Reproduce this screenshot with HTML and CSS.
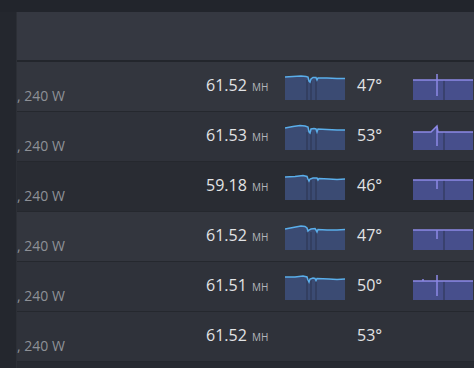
FILE: index.html
```html
<!DOCTYPE html>
<html lang="en">
<head>
  <meta charset="UTF-8">
  <meta name="viewport" content="width=device-width, initial-scale=1.0">
  <title>Rigs</title>
  <link rel="stylesheet" href="styles.css">
</head>
<body>
  <div class="page">
    <div class="topbar"></div>
    <div class="content">
      <div class="sidebar"></div>
      <div class="panel">
        <div class="panel-head"></div>

        <div class="row">
          <div class="name">, 240 W</div>
          <div class="rate">61.52 <span class="unit">MH</span></div>
          <svg class="chart" viewBox="0 0 60 26" preserveAspectRatio="none">
            <path class="fill-blue" d="M0 3 L8 2.5 L16 2 L21 2.5 L23 3 L24 7 L25 8 L26 5 L28 3.5 L31 3.5 L32 6 L33 4 L42 4 L52 4.5 L60 4.5 L60 26 L0 26 Z"/>
            <path class="grid" d="M22 6 V26 M26 6 V26 M31 6 V26"/>
            <path class="line-blue" d="M0 3 L8 2.5 L16 2 L21 2.5 L23 3 L24 7 L25 8 L26 5 L28 3.5 L31 3.5 L32 6 L33 4 L42 4 L52 4.5 L60 4.5"/>
          </svg>
          <div class="temp">47°</div>
          <svg class="chart" viewBox="0 0 60 26" preserveAspectRatio="none">
            <path class="fill-violet" d="M0 6 H60 V26 H0 Z"/>
            <path class="grid" d="M31 6 V26"/>
            <path class="line-violet" d="M0 6 H60 M24 0 V22"/>
          </svg>
        </div>

        <div class="row dim">
          <div class="name">, 240 W</div>
          <div class="rate">61.53 <span class="unit">MH</span></div>
          <svg class="chart" viewBox="0 0 60 26" preserveAspectRatio="none">
            <path class="fill-blue" d="M0 4 L8 2.5 L15 1.5 L20 2 L23 3 L24 8 L25 9 L26 5 L29 4.5 L31 5 L32 8 L33 5 L42 5.5 L52 6 L60 6 L60 26 L0 26 Z"/>
            <path class="grid" d="M22 8 V26 M26 8 V26 M31 8 V26"/>
            <path class="line-blue" d="M0 4 L8 2.5 L15 1.5 L20 2 L23 3 L24 8 L25 9 L26 5 L29 4.5 L31 5 L32 8 L33 5 L42 5.5 L52 6 L60 6"/>
          </svg>
          <div class="temp">53°</div>
          <svg class="chart" viewBox="0 0 60 26" preserveAspectRatio="none">
            <path class="fill-violet" d="M0 8 L18 8 L21 5 L24 2 L25 8 H60 V26 H0 Z"/>
            <path class="grid" d="M31 8 V26"/>
            <path class="line-violet" d="M0 8 L18 8 L21 5 L24 2 L25 8 H60 M24 2 V22"/>
          </svg>
        </div>

        <div class="row dark">
          <div class="name">, 240 W</div>
          <div class="rate">59.18 <span class="unit">MH</span></div>
          <svg class="chart" viewBox="0 0 60 26" preserveAspectRatio="none">
            <path class="fill-blue" d="M0 3 L10 2.5 L18 1.5 L22 2.5 L23 5 L24 7 L25 5 L28 4 L32 4 L33 6 L34 4.5 L44 5 L52 5.5 L60 5 L60 26 L0 26 Z"/>
            <path class="grid" d="M22 6 V26 M26 6 V26 M31 6 V26"/>
            <path class="line-blue" d="M0 3 L10 2.5 L18 1.5 L22 2.5 L23 5 L24 7 L25 5 L28 4 L32 4 L33 6 L34 4.5 L44 5 L52 5.5 L60 5"/>
          </svg>
          <div class="temp">46°</div>
          <svg class="chart" viewBox="0 0 60 26" preserveAspectRatio="none">
            <path class="fill-violet" d="M0 6 H60 V26 H0 Z"/>
            <path class="grid" d="M31 6 V26"/>
            <path class="line-violet" d="M0 6 H60 M24 6 V15"/>
          </svg>
        </div>

        <div class="row">
          <div class="name">, 240 W</div>
          <div class="rate">61.52 <span class="unit">MH</span></div>
          <svg class="chart" viewBox="0 0 60 26" preserveAspectRatio="none">
            <path class="fill-blue" d="M0 5 L8 3.5 L16 2 L20 2.5 L22 4 L23 7 L24 6 L26 5 L30 4.5 L31 6 L32 8 L33 5.5 L42 6 L52 6 L60 5.5 L60 26 L0 26 Z"/>
            <path class="grid" d="M22 8 V26 M26 8 V26 M31 8 V26"/>
            <path class="line-blue" d="M0 5 L8 3.5 L16 2 L20 2.5 L22 4 L23 7 L24 6 L26 5 L30 4.5 L31 6 L32 8 L33 5.5 L42 6 L52 6 L60 5.5"/>
          </svg>
          <div class="temp">47°</div>
          <svg class="chart" viewBox="0 0 60 26" preserveAspectRatio="none">
            <path class="fill-violet" d="M0 6 H60 V26 H0 Z"/>
            <path class="grid" d="M31 6 V26"/>
            <path class="line-violet" d="M0 6 H60 M24 6 V15"/>
          </svg>
        </div>

        <div class="row dim">
          <div class="name">, 240 W</div>
          <div class="rate">61.51 <span class="unit">MH</span></div>
          <svg class="chart" viewBox="0 0 60 26" preserveAspectRatio="none">
            <path class="fill-blue" d="M0 3 L10 3 L18 2 L22 3 L23 6 L24 8 L25 5 L28 4 L30 4.5 L31 6.5 L32 4.5 L44 5 L52 5.5 L60 5 L60 26 L0 26 Z"/>
            <path class="grid" d="M22 6 V26 M26 6 V26 M31 6 V26"/>
            <path class="line-blue" d="M0 3 L10 3 L18 2 L22 3 L23 6 L24 8 L25 5 L28 4 L30 4.5 L31 6.5 L32 4.5 L44 5 L52 5.5 L60 5"/>
          </svg>
          <div class="temp">50°</div>
          <svg class="chart" viewBox="0 0 60 26" preserveAspectRatio="none">
            <path class="fill-violet" d="M0 7 H60 V26 H0 Z"/>
            <path class="grid" d="M31 7 V26"/>
            <path class="line-violet" d="M0 7 H60 M24 1 V22 M10 5 V7"/>
          </svg>
        </div>

        <div class="row dim">
          <div class="name">, 240 W</div>
          <div class="rate">61.52 <span class="unit">MH</span></div>
          <div class="chart"></div>
          <div class="temp">53°</div>
        </div>
      </div>
    </div>
  </div>
</body>
</html>
```

FILE: styles.css
```css
* {
  box-sizing: border-box;
}

html,
body {
  margin: 0;
  height: 100%;
  overflow: hidden;
  background-color: #22252c;
  font-family: 'Open Sans', 'DejaVu Sans', sans-serif;
}

.page {
  height: 100%;
  display: flex;
  flex-direction: column;
}

.topbar {
  height: 12px;
  background-color: #22252c;
}

.content {
  flex: 1;
  display: flex;
}

.sidebar {
  width: 16px;
  flex-shrink: 0;
  background-color: #24272e;
}

.panel {
  flex: 1;
  min-width: 0;
  overflow: hidden;
  background-color: #272a31;
  border-left: 1px solid #2c2f36;
}

.panel-head {
  height: 50px;
  background-color: #353841;
  border-bottom: 2px solid #23262c;
}

.row {
  height: 50px;
  display: grid;
  grid-template-columns: 189px 79px 60px 68px 60px;
  align-items: center;
  background-color: #33363e;
  border-bottom: 1px solid #25282e;
}

.row.dim {
  background-color: #2f323a;
}

.row.dark {
  background-color: #292c33;
}

.name {
  align-self: end;
  padding-bottom: 6px;
  font-size: 14px;
  color: #8e9197;
  white-space: nowrap;
}

.rate {
  font-size: 16px;
  color: #e2e3e5;
  margin-top: -3px;
  white-space: nowrap;
}

.unit {
  font-size: 10px;
  color: #b4b6ba;
  margin-left: 1px;
}

.chart {
  display: block;
  width: 60px;
  height: 26px;
  margin-top: 1px;
}

.temp {
  font-size: 16px;
  color: #e2e3e5;
  padding-left: 12px;
  margin-top: -3px;
}

.fill-blue {
  fill: #3b4b73;
}

.fill-violet {
  fill: #474f8c;
}

.grid {
  stroke: #2c3550;
  stroke-width: 1;
  fill: none;
  vector-effect: non-scaling-stroke;
}

.line-blue {
  stroke: #5aaeea;
  stroke-width: 1.5;
  fill: none;
  vector-effect: non-scaling-stroke;
}

.line-violet {
  stroke: #8d89e6;
  stroke-width: 1.5;
  fill: none;
  vector-effect: non-scaling-stroke;
}
```
